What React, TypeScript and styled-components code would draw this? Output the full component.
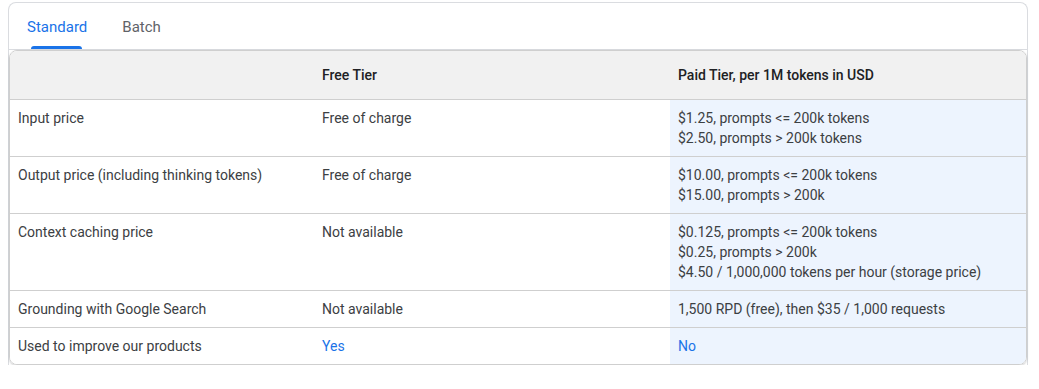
import React, { useState } from "react";
import styled, { createGlobalStyle } from "styled-components";

const GlobalStyle = createGlobalStyle`
  body {
    margin: 2px 0 0 8px;
    background: #ffffff;
    font-family: Roboto, "Noto Sans", Arial, sans-serif;
  }
`;

type Row = {
  label: string;
  free: string[];
  paid: string[];
  link?: boolean;
};

const ROWS: Row[] = [
  {
    label: "Input price",
    free: ["Free of charge"],
    paid: ["$1.25, prompts <= 200k tokens", "$2.50, prompts > 200k tokens"],
  },
  {
    label: "Output price (including thinking tokens)",
    free: ["Free of charge"],
    paid: ["$10.00, prompts <= 200k tokens", "$15.00, prompts > 200k"],
  },
  {
    label: "Context caching price",
    free: ["Not available"],
    paid: [
      "$0.125, prompts <= 200k tokens",
      "$0.25, prompts > 200k",
      "$4.50 / 1,000,000 tokens per hour (storage price)",
    ],
  },
  {
    label: "Grounding with Google Search",
    free: ["Not available"],
    paid: ["1,500 RPD (free), then $35 / 1,000 requests"],
  },
  {
    label: "Used to improve our products",
    free: ["Yes"],
    paid: ["No"],
    link: true,
  },
];

const TABS = ["Standard", "Batch"];

const App = (): JSX.Element => {
  const [active, setActive] = useState(0);

  return (
    <>
      <GlobalStyle />
      <Card>
        <TabBar>
          {TABS.map((tab, i) => (
            <Tab key={tab} $active={i === active} onClick={() => setActive(i)}>
              {tab}
            </Tab>
          ))}
        </TabBar>
        <TableWrap>
          <Table>
            <colgroup>
              <col style={{ width: 304 }} />
              <col style={{ width: 356 }} />
              <col />
            </colgroup>
            <thead>
              <tr>
                <HeadCell />
                <HeadCell>Free Tier</HeadCell>
                <HeadCell>Paid Tier, per 1M tokens in USD</HeadCell>
              </tr>
            </thead>
            <tbody>
              {ROWS.map((row) => (
                <tr key={row.label}>
                  <Cell>{row.label}</Cell>
                  <Cell $link={row.link}>
                    {row.free.map((line) => (
                      <Line key={line}>{line}</Line>
                    ))}
                  </Cell>
                  <Cell $paid $link={row.link}>
                    {row.paid.map((line) => (
                      <Line key={line}>{line}</Line>
                    ))}
                  </Cell>
                </tr>
              ))}
            </tbody>
          </Table>
        </TableWrap>
      </Card>
    </>
  );
};

const Card = styled.div`
  width: 1018px;
  border: 1px solid #dadce0;
  border-bottom: none;
  border-radius: 8px 8px 0 0;
`;

const TabBar = styled.div`
  display: flex;
  height: 46px;
  border-bottom: 1px solid #dadce0;
`;

const Tab = styled.button<{ $active?: boolean }>`
  position: relative;
  display: flex;
  align-items: center;
  padding: 2px 18px 0 18px;
  margin-right: -1px;
  border: 0;
  background: none;
  cursor: pointer;
  font-family: inherit;
  font-size: 15px;
  font-weight: 400;
  color: ${(p) => (p.$active ? "#1a73e8" : "#5f6368")};

  &::after {
    content: "";
    display: ${(p) => (p.$active ? "block" : "none")};
    position: absolute;
    left: 22px;
    right: 23px;
    bottom: 0;
    height: 3px;
    border-radius: 3px 3px 0 0;
    background: #1a73e8;
  }
`;

const TableWrap = styled.div`
  border: 1px solid #cfcfcf;
  border-radius: 8px;
  overflow: hidden;
  box-shadow: 0 1px 2px rgba(60, 64, 67, 0.25);
`;

const Table = styled.table`
  width: 100%;
  border-collapse: collapse;
  table-layout: fixed;
  font-size: 14px;
  line-height: 20px;
  color: #3c4043;

  tbody tr:not(:last-child) td {
    border-bottom: 1px solid #cfcfcf;
  }
`;

const HeadCell = styled.th`
  padding: 14px 8px;
  background: #f1f1f1;
  border-bottom: 1px solid #cfcfcf;
  text-align: left;
  font-weight: 500;
  color: #202124;
`;

const Cell = styled.td<{ $paid?: boolean; $link?: boolean }>`
  padding: 8px;
  vertical-align: top;
  background: ${(p) => (p.$paid ? "#edf4fe" : "#ffffff")};
  color: ${(p) => (p.$link ? "#1a73e8" : "#3c4043")};
`;

const Line = styled.div``;

export default App;
